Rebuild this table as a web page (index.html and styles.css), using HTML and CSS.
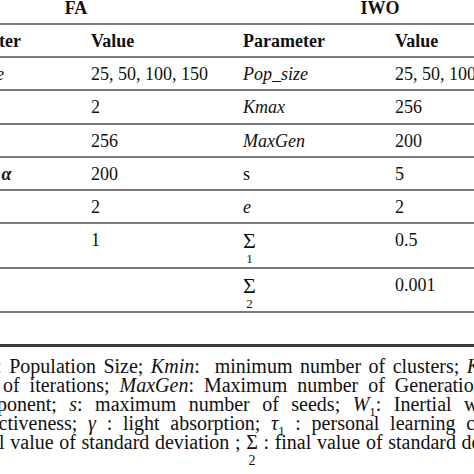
FILE: index.html
```html
<!DOCTYPE html>
<html>
<head>
<meta charset="utf-8">
<link rel="stylesheet" href="styles.css">
</head>
<body>
<div class="page">
  <div class="titles">
    <div class="title">FA</div>
    <div class="title">IWO</div>
  </div>
  <div class="row head">
    <div class="cell">Parameter</div><div class="cell">Value</div>
    <div class="cell">Parameter</div><div class="cell">Value</div>
  </div>
  <div class="row">
    <div class="cell"><i>Pop_size</i></div><div class="cell">25, 50, 100, 150</div>
    <div class="cell"><i>Pop_size</i></div><div class="cell">25, 50, 100, 150</div>
  </div>
  <div class="row r2">
    <div class="cell"><i>Kmin</i></div><div class="cell">2</div>
    <div class="cell"><i>Kmax</i></div><div class="cell">256</div>
  </div>
  <div class="row r3">
    <div class="cell"><i>Kmax</i></div><div class="cell">256</div>
    <div class="cell"><i>MaxGen</i></div><div class="cell">200</div>
  </div>
  <div class="row">
    <div class="cell"><i>MaxIter</i>&nbsp;<b><i>α</i></b></div><div class="cell">200</div>
    <div class="cell">s</div><div class="cell">5</div>
  </div>
  <div class="row">
    <div class="cell"><i>β</i></div><div class="cell">2</div>
    <div class="cell"><i>e</i></div><div class="cell">2</div>
  </div>
  <div class="row tall">
    <div class="cell"><i>γ</i></div><div class="cell">1</div>
    <div class="cell"><span class="sum"><span class="sig">Σ</span><span class="idx">1</span></span></div><div class="cell">0.5</div>
  </div>
  <div class="row tall t2">
    <div class="cell"></div><div class="cell"></div>
    <div class="cell"><span class="sum"><span class="sig">Σ</span><span class="idx">2</span></span></div><div class="cell">0.001</div>
  </div>
  <div class="row empty">
    <div class="cell"></div><div class="cell"></div><div class="cell"></div><div class="cell"></div>
  </div>
  <div class="rule"></div>
</div>
<div class="caption">
  <div class="line l1"><i>Pop_size</i>: Population Size; <i>Kmin</i>: &nbsp;minimum number of clusters; <i>Kmax</i>:</div>
  <div class="line l2">of iterations; <i>MaxGen</i>: Maximum number of Generations;</div>
  <div class="line l3">exponent; <i>s</i>: maximum number of seeds; <i>W</i><sub>1</sub>: Inertial weight;</div>
  <div class="line l4">attractiveness; <i>γ</i> : light absorption; <i>τ</i><sub>1</sub> : personal learning coefficient;</div>
  <div class="line l5">initial value of standard deviation ; <span class="sum small"><span class="sig">Σ</span><span class="idx">2</span></span> : final value of standard deviation.</div>
</div>
</body>
</html>
```
FILE: styles.css
```css
html, body {
  margin: 0;
  padding: 0;
}
body {
  width: 474px;
  height: 474px;
  overflow: hidden;
  background: #fff;
  color: #111;
  font-family: "Liberation Serif", "Times New Roman", serif;
  font-size: 18px;
}
.page {
  margin-left: -67px;
  width: 620px;
}
.titles {
  display: flex;
  height: 23px;
}
.title {
  width: 304px;
  box-sizing: border-box;
  padding-right: 18px;
  text-align: center;
  font-weight: bold;
  line-height: 16px;
}
.row {
  display: grid;
  grid-template-columns: 152px 152px 152px 152px;
  border-top: 2px solid #7a7a7a;
  height: 31px;
  align-items: center;
}
.row.r2 { height: 32px; }
.row.r3 { height: 31px; }
.row.head { font-weight: bold; }
.cell {
  padding-left: 6px;
  white-space: nowrap;
  line-height: 20px;
}
.row.tall {
  height: 43px;
  align-items: start;
}
.row.tall .cell { padding-top: 6px; }
.row.t2 { height: 42px; }
.row.empty { height: 31px; }
.rule {
  border-top: 3px solid #3a3a3a;
}
.sum {
  display: inline-flex;
  flex-direction: column;
  align-items: center;
  vertical-align: top;
  line-height: 1;
}
.sum .sig {
  font-size: 22px;
  line-height: 21px;
}
.sum .idx {
  font-size: 13px;
  line-height: 12px;
  margin-top: 2px;
}
.caption {
  padding-top: 10px;
  font-size: 20px;
}
.line {
  white-space: nowrap;
  text-align: justify;
  text-align-last: justify;
  line-height: 19px;
  height: 19px;
}
.line.l1 { margin-left: -76px; width: 595px; }
.line.l2 { margin-left: 3px; width: 494px; }
.line.l3 { margin-left: -22px; width: 546px; }
.line.l4 { margin-left: -37px; width: 594px; }
.line.l5 { margin-left: -42px; width: 583px; }
.line sub {
  font-size: 13px;
  line-height: 0;
}
.sum.small {
  vertical-align: top;
}
.sum.small .sig { font-size: 20px; line-height: 19px; }
.sum.small .idx { font-size: 14px; line-height: 12px; margin-top: 3px; }
```
